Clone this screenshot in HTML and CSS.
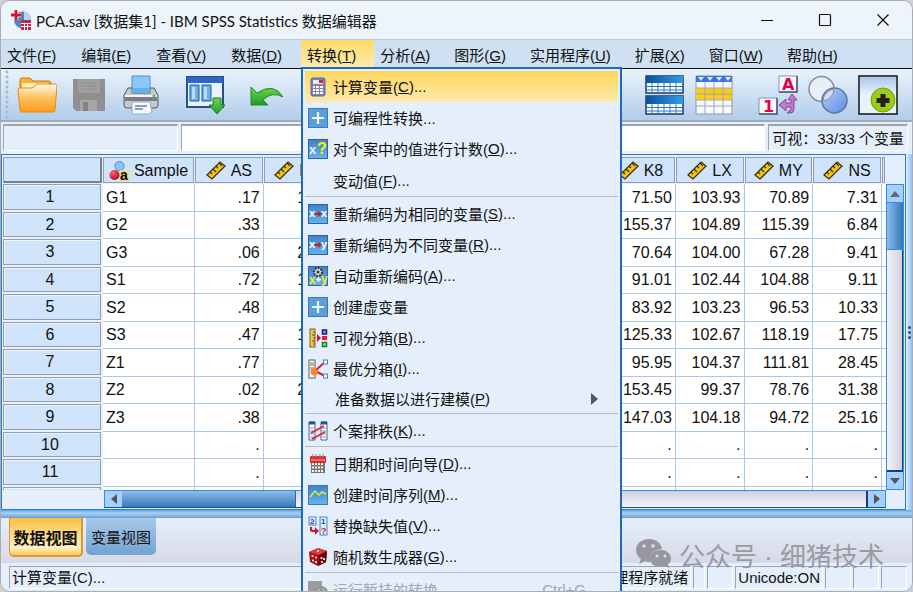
FILE: index.html
```html
<!DOCTYPE html>
<html lang="zh-CN">
<head>
  <meta charset="UTF-8" />
  <meta name="viewport" content="width=device-width, initial-scale=1" />
  <title>PCA.sav [数据集1] - IBM SPSS Statistics 数据编辑器</title>
  <link rel="stylesheet" href="styles.css">
</head>
<body>
  <!-- Shared icons -->
  <svg class="defs" aria-hidden="true">
    <defs>
      <linearGradient id="gBlue" x1="0" y1="0" x2="0" y2="1"><stop offset="0" stop-color="#3f83c8"/><stop offset="1" stop-color="#62b4e8"/></linearGradient>
      <linearGradient id="gFolder" x1="0" y1="0" x2="0" y2="1"><stop offset="0" stop-color="#fffbe8"/><stop offset=".5" stop-color="#ffc05a"/><stop offset="1" stop-color="#ff9a1f"/></linearGradient>
      <linearGradient id="gGreen" x1="0" y1="0" x2="0" y2="1"><stop offset="0" stop-color="#6fd84a"/><stop offset="1" stop-color="#1f9a28"/></linearGradient>
      <linearGradient id="gHead" x1="0" y1="0" x2="1" y2="0"><stop offset="0" stop-color="#0b4f96"/><stop offset="1" stop-color="#2f9bf0"/></linearGradient>
      <linearGradient id="gSky" x1="0" y1="0" x2="0" y2="1"><stop offset="0" stop-color="#a9c8ea"/><stop offset="1" stop-color="#edf5fd"/></linearGradient>
      <linearGradient id="gCircle" x1="0" y1="0" x2="1" y2="1"><stop offset="0" stop-color="#b9cff5"/><stop offset="1" stop-color="#5c8be6"/></linearGradient>
      <radialGradient id="gRed" cx=".35" cy=".3" r=".8"><stop offset="0" stop-color="#ff6a6a"/><stop offset="1" stop-color="#b00018"/></radialGradient>
    </defs>
    <symbol id="ruler" viewBox="0 0 20 20">
      <path d="M1 14 14 1l5 4L6 18z" fill="#f2c21c" stroke="#3a3110" stroke-width="1.3"/>
      <path d="m4 11 2 2M7 8l3 3M10 5l2 2M13 2l3 3" stroke="#3a3110" stroke-width="1.2"/>
    </symbol>
    <symbol id="nominal" viewBox="0 0 20 20">
      <circle cx="10.500" cy="5" r="4.600" fill="#8fc3f5" stroke="#4b8fd6"/>
      <circle cx="5.500" cy="14" r="5" fill="url(#gRed)"/>
      <rect x="11" y="9" width="9" height="11" fill="#f5d77e"/>
      <text x="11" y="18.500" font-size="14" font-weight="bold" font-family="Liberation Sans, sans-serif">a</text>
    </symbol>
    <symbol id="plus" viewBox="0 0 20 20">
      <rect x=".5" y=".5" width="19" height="19" fill="#5c9fd8" stroke="#3c78c0"/>
      <path d="M10 4v12M4 10h12" stroke="#e9f5ff" stroke-width="2.200"/>
    </symbol>
  </svg>

  <div class="window">
    <header class="titlebar">
      <svg class="app-icon" viewBox="0 0 20 20">
        <circle cx="11.500" cy="10" r="8.500" fill="#4e86bb"/>
        <path d="M13 1.500a8.500 8.500 0 0 1 7 8.500h-7z" fill="#b9d4ea"/>
        <path d="M5 0v10M0 5h10" stroke="#fff" stroke-width="4.500"/>
        <path d="M5 0v10M0 5h10" stroke="#d3132f" stroke-width="2.800"/>
        <rect x="10" y="10" width="10" height="10" fill="#c92349"/>
        <path d="M10 13.500h10M10 16.500h10M13.500 13v7M16.500 13v7" stroke="#fff"/>
      </svg>
      <h1>PCA.sav [数据集1] - IBM SPSS Statistics 数据编辑器</h1>
      <div class="win-buttons">
        <button aria-label="最小化"><svg viewBox="0 0 14 14"><path d="M1 7.500h12" /></svg></button>
        <button aria-label="最大化"><svg viewBox="0 0 14 14"><rect x="1.500" y="1.500" width="11" height="11" rx="1"/></svg></button>
        <button aria-label="关闭"><svg viewBox="0 0 14 14"><path d="m1.500 1.500 11 11M12.500 1.500l-11 11"/></svg></button>
      </div>
    </header>

    <nav class="menubar">
      <div class="menu"><button>文件(<u>F</u>)</button></div>
      <div class="menu"><button>编辑(<u>E</u>)</button></div>
      <div class="menu"><button>查看(<u>V</u>)</button></div>
      <div class="menu"><button>数据(<u>D</u>)</button></div>
      <div class="menu open">
        <button>转换(<u>T</u>)</button>
        <ul class="dropdown">
          <li><button class="selected">
            <svg viewBox="0 0 20 20"><rect x="3" y="1" width="14" height="18" rx="2" fill="#8181b5" stroke="#62629a"/><rect x="5" y="3" width="10" height="4" fill="#e9e9f8"/><rect x="11" y="3" width="4" height="3" fill="#c62b3c"/><path d="M5 10h2m1 0h3m1 0h3M5 13h2m1 0h3m1 0h3M5 16h2m1 0h3m1 0h3" stroke="#fff" stroke-width="2"/></svg>
            计算变量(<u>C</u>)...</button></li>
          <li><button><svg><use href="#plus"/></svg>可编程性转换...</button></li>
          <li><button>
            <svg viewBox="0 0 20 20"><rect x=".5" y=".5" width="19" height="19" fill="url(#gBlue)" stroke="#2f5fb0"/><text x="1" y="15" font-size="13" font-weight="bold" fill="#e6f2ff">x</text><text x="9" y="15" font-size="16" font-weight="bold" fill="#fff200">?</text></svg>
            对个案中的值进行计数(<u>O</u>)...</button></li>
          <li><button class="plain">变动值(<u>F</u>)...</button></li>
          <li class="sep"></li>
          <li><button>
            <svg viewBox="0 0 20 20"><rect x=".5" y=".5" width="19" height="19" fill="url(#gBlue)" stroke="#2f5fb0"/><text x="1" y="13" font-size="11" font-weight="bold" fill="#fff">x</text><text x="13" y="13" font-size="11" font-weight="bold" fill="#fff">x</text><path d="M7 9h3V7l4 3-4 3v-2H7z" fill="#d2142c"/></svg>
            重新编码为相同的变量(<u>S</u>)...</button></li>
          <li><button>
            <svg viewBox="0 0 20 20"><rect x=".5" y=".5" width="19" height="19" fill="url(#gBlue)" stroke="#2f5fb0"/><text x="1" y="13" font-size="11" font-weight="bold" fill="#fff">x</text><text x="13" y="13" font-size="11" font-weight="bold" fill="#fff">y</text><path d="M7 9h3V7l4 3-4 3v-2H7z" fill="#d2142c"/></svg>
            重新编码为不同变量(<u>R</u>)...</button></li>
          <li><button>
            <svg viewBox="0 0 20 20"><rect x=".5" y=".5" width="19" height="19" fill="url(#gBlue)" stroke="#2f5fb0"/><circle cx="10" cy="6" r="4" fill="#ddd" stroke="#333" stroke-width="2" stroke-dasharray="2 1"/><circle cx="10" cy="6" r="1.500" fill="#333"/><text x="1" y="18" font-size="12" font-weight="bold" fill="#f6ec2a">x</text><text x="13" y="17" font-size="12" font-weight="bold" fill="#f6ec2a">y</text><path d="M8 13.500h5M10.500 11v5" stroke="#fff" stroke-width="1.500"/></svg>
            自动重新编码(<u>A</u>)...</button></li>
          <li><button><svg><use href="#plus"/></svg>创建虚变量</button></li>
          <li><button>
            <svg viewBox="0 0 20 20"><rect x="2" y="1" width="5" height="18" fill="#f3c94a" stroke="#7b6420"/><path d="M5 4h2M4 7h3M5 10h2M4 13h3M5 16h2" stroke="#5c4a12"/><path d="m9 6 4 4-4 4z" fill="#d2142c"/><rect x="14.500" y="2" width="4" height="4" fill="#8fa4e0" stroke="#101a90" stroke-width="1.500"/><rect x="14" y="8" width="5" height="4" fill="#e02030"/><rect x="14.500" y="14.500" width="4" height="4" fill="#9bdc9b" stroke="#118022" stroke-width="1.500"/></svg>
            可视分箱(<u>B</u>)...</button></li>
          <li><button>
            <svg viewBox="0 0 20 20"><rect x="1" y="1" width="6" height="18" fill="#fff" stroke="#3a6190"/><rect x="2" y="3" width="4" height="4" fill="#e8b53a"/><rect x="2" y="8" width="4" height="3" fill="#a5b9cf"/><path d="M17 3 7 12l10 5" fill="none" stroke="#d8183c" stroke-width="2"/><circle cx="6" cy="13" r="3.500" fill="#ff8a12"/><rect x="15.500" y="1" width="4" height="4" fill="#fff" stroke="#4a83b5"/><rect x="15.500" y="15" width="4" height="4" fill="#fff" stroke="#4a83b5"/></svg>
            最优分箱(<u>I</u>)...</button></li>
          <li><button class="submenu">准备数据以进行建模(<u>P</u>)<span class="arrow"></span></button></li>
          <li class="sep"></li>
          <li><button>
            <svg viewBox="0 0 20 20"><path d="M1 1h6v18H1zM13 1h6v18h-6z" fill="#fff" stroke="#456091"/><path d="M1 2h6M13 2h6" stroke="#2d4f96" stroke-width="3"/><path d="M2 7h4M2 10h4M2 13h4M2 16h4M14 7h4M14 10h4M14 13h4M14 16h4" stroke="#8292ac"/><path d="M3 12 16 5M4 18l13-7" stroke="#d92836" stroke-width="1.800"/></svg>
            个案排秩(<u>K</u>)...</button></li>
          <li class="sep"></li>
          <li><button>
            <svg viewBox="0 0 20 20"><rect x="3" y="8" width="14" height="11" fill="#777"/><path d="M4 10h12M4 13.500h12M4 17h12" stroke="#eee" stroke-width="2" stroke-dasharray="2 1"/><rect x="2" y="2" width="16" height="7" rx="1" fill="#dd2c2c"/><path d="M3 6h14" stroke="#ffb0b0"/><path d="M5 0v4M8 0v4M12 0v4M15 0v4" stroke="#888"/></svg>
            日期和时间向导(<u>D</u>)...</button></li>
          <li><button>
            <svg viewBox="0 0 20 20"><rect x=".5" y=".5" width="19" height="19" fill="url(#gBlue)" stroke="#3c78c0"/><path d="m2 12 5-6 4 4 3-3 4 2" fill="none" stroke="#e3e92f" stroke-width="1.500"/></svg>
            创建时间序列(<u>M</u>)...</button></li>
          <li><button>
            <svg viewBox="0 0 20 20"><rect x="1" y="1" width="7" height="8" fill="#d9ebff" stroke="#4d88c8"/><rect x="12" y="1" width="7" height="18" fill="#d9ebff" stroke="#4d88c8"/><text x="2" y="8" font-size="8" font-weight="bold" fill="#24548f">2</text><text x="13" y="8" font-size="8" font-weight="bold" fill="#24548f">1</text><text x="13" y="18" font-size="9" font-weight="bold" fill="#e0202c">?</text><path d="M2 11h2v3h3v-3l4 4-4 4v-3H4q-2 0-2-2z" fill="#d2142c"/></svg>
            替换缺失值(<u>V</u>)...</button></li>
          <li><button>
            <svg viewBox="0 0 20 20"><path d="m1 5 9-4 9 3-1 11-8 4-8-4z" fill="#a80f16"/><path d="m1 5 9-4 9 3-8 4z" fill="#d84040"/><path d="m11 8 8-4-1 11-8 4z" fill="#6a070b"/><g fill="#fff"><circle cx="10" cy="4" r="1"/><circle cx="4.500" cy="9" r="1.100"/><circle cx="8" cy="15" r="1.100"/><circle cx="5" cy="13.500" r="1"/><circle cx="8" cy="10.500" r="1"/><circle cx="13.500" cy="11" r="1.100"/><circle cx="16" cy="12" r="1.100"/><circle cx="14" cy="15" r="1"/></g></svg>
            随机数生成器(<u>G</u>)...</button></li>
          <li class="sep"></li>
          <li><button disabled>
            <svg viewBox="0 0 20 20"><path d="M0 1h14v5a7 7 0 0 1 6 7v7H0z" fill="#9c9c9c"/><circle cx="13" cy="13" r="6" fill="#a9a9a9" stroke="#858585"/><path d="M13 9v4l3 2" fill="none" stroke="#777"/></svg>
            运行暂挂的转换<kbd>Ctrl+G</kbd></button></li>
        </ul>
      </div>
      <div class="menu"><button>分析(<u>A</u>)</button></div>
      <div class="menu"><button>图形(<u>G</u>)</button></div>
      <div class="menu"><button>实用程序(<u>U</u>)</button></div>
      <div class="menu"><button>扩展(<u>X</u>)</button></div>
      <div class="menu"><button>窗口(<u>W</u>)</button></div>
      <div class="menu"><button>帮助(<u>H</u>)</button></div>
    </nav>

    <div class="toolbar">
      <div class="tools">
        <button aria-label="打开"><svg viewBox="0 0 40 40"><path d="M3 5q0-2 2-2h8l3 3h15q3 0 3 2v10H3z" fill="#ffb02e" stroke="#c87a10"/><path d="M5 8h26v5H5z" fill="#fff1bd"/><path d="M1 15q0-2 2-2h12l5-4h18q2 0 2 2l-2 24q0 2-2 2H5q-2 0-2-2z" fill="url(#gFolder)" stroke="#e28a12"/></svg></button>
        <button aria-label="保存"><svg viewBox="0 0 40 40"><path d="M4 4h32v32H7l-3-3z" fill="#8f8f8f"/><path d="M9 4h22v14H9z" fill="#9f9f9f"/><path d="M12 8h16M12 11h16M12 14h16" stroke="#909090"/><path d="M11 25h17v11H11z" fill="#a6a6a6"/><path d="M14 27h5v9h-5z" fill="#838383"/></svg></button>
        <button aria-label="打印"><svg viewBox="0 0 40 40"><path d="M11 1h18v16H11z" fill="#8cc8f5" stroke="#4f94d0"/><path d="M7 13h4v5h18v-5h4l4 7v10q0 3-3 3H6q-3 0-3-3V20z" fill="#c9c9cd" stroke="#55565c"/><path d="M11 13h18v5H11z" fill="#62b0ef"/><path d="M4 21h32v5H4z" fill="#7c7d84"/><path d="M4 21h32" stroke="#f3f3f3" stroke-width="2"/><circle cx="33" cy="21" r="1.500" fill="#31c738"/><path d="M11 27h18l2 10-3 2H11z" fill="#f5fbff" stroke="#8eacca"/><path d="M14 31h12M14 34h8" stroke="#6a7fae" stroke-width="1.500"/></svg></button>
      </div>
      <div class="tools">
        <button aria-label="重新调用对话框"><svg viewBox="0 0 40 40"><path d="M2 2h36v30H2z" fill="#e9f3ff" stroke="#2c4f8a" stroke-width="2"/><path d="M2 2h36v6H2z" fill="#2d66c4"/><path d="M5 10h9v16H5zM17 10h9v16h-9z" fill="#67b2ee" stroke="#23588f"/><path d="M7 12h3v12H7zM19 12h3v12h-3z" fill="#b8deff"/><path d="M28 23h8v7h4l-8 9-8-9h4z" fill="url(#gGreen)" stroke="#178025"/></svg></button>
      </div>
      <div class="tools">
        <button aria-label="撤消"><svg viewBox="0 0 40 40"><path d="M2 12v18h17l-5-5q9-9 20-3Q25 7 8 18z" fill="url(#gGreen)" stroke="#23892c"/></svg></button>
        <button aria-label="重做"><svg viewBox="0 0 40 40"><path d="M34 12v18H17l5-5q-9-9-22-3Q11 7 28 18z" fill="url(#gGreen)" stroke="#23892c"/></svg></button>
      </div>
      <div class="tools right">
        <button aria-label="拆分文件"><svg viewBox="0 0 40 40"><path d="M2 1h37v17H2zM2 21h37v18H2z" fill="#fff" stroke="#173a6b" stroke-width="1.500"/><path d="M2 1h37v7H2zM2 21h37v8H2z" fill="url(#gHead)"/><path d="M2 11.500h37M2 15h37M2 32.500h37M2 36h37M8 8v10M14 8v10M20 8v10M26 8v10M32 8v10M8 29v10M14 29v10M20 29v10M26 29v10M32 29v10" stroke="#2876c8"/></svg></button>
        <button aria-label="选择个案"><svg viewBox="0 0 40 40"><path d="M2 1h36v38H2z" fill="#f7f9fd" stroke="#8d96aa"/><path d="M2 1h36v6H2z" fill="#3f71db"/><path d="m4 2 3 4 3-4zM13 2l3 4 3-4zM22 2l3 4 3-4zM31 2l3 4 3-4z" fill="#dce9ff"/><path d="M2 13h36v12H2z" fill="#f9cc1c"/><path d="M2 13h36M2 19h36M2 25h36M2 31h36M11 7v32M20 7v32M29 7v32" stroke="#a4a7b0"/></svg></button>
      </div>
      <div class="tools">
        <button aria-label="值标签"><svg viewBox="0 0 40 40"><path d="M21 1h18v16H21zM1 23h18v16H1z" fill="#f7f9ff" stroke="#8793ac"/><path d="M21 17h18V1M1 39h18V23" fill="none" stroke="#47546e" stroke-width="1.500"/><text x="24" y="15" font-size="16" font-weight="bold" fill="#e5004c">A</text><text x="5" y="37" font-size="16" font-weight="bold" fill="#e5004c">1</text><path d="m34 19 5 6h-3v9q0 4-4 4h-3l4-4v-2h-5v4l-7-6 7-6v4h5v-3h-3z" fill="#bd7bc9" stroke="#874897"/></svg></button>
        <button aria-label="使用变量集"><svg viewBox="0 0 40 40"><circle cx="13.500" cy="14" r="12.500" fill="#e8eff9" stroke="#858d9b" stroke-width="1.500"/><circle cx="26.500" cy="25.500" r="12.500" fill="url(#gCircle)" stroke="#64759a" stroke-width="1.500"/><path d="M15 26a12.500 12.500 0 0 0 11-12 12.500 12.500 0 0 0-11 12z" fill="#d0dff3" stroke="#858d9b"/></svg></button>
        <button aria-label="定制工具栏"><svg viewBox="0 0 40 40"><rect x="1" y="1" width="38" height="38" fill="#e8f2fc" stroke="#111" stroke-width="1.500"/><path d="M2 2h36v14L2 21z" fill="url(#gSky)"/><circle cx="25" cy="25" r="12" fill="#9ccd13" stroke="#769f0c"/><path d="M25 19v13M18.500 25.500h13" stroke="#222" stroke-width="5"/></svg></button>
      </div>
    </div>

    <div class="infobar">
      <output class="cell-name"></output>
      <input type="text" class="cell-value" aria-label="单元格值">
      <span class="visible-count">可视：33/33 个变量</span>
    </div>

    <main class="editor">
      <div class="sheet">
        <div class="table-wrap">
          <table>
            <colgroup>
              <col class="col-num"><col class="col-name">
              <col><col><col><col><col><col><col><col><col><col>
              <col class="col-more">
            </colgroup>
            <thead>
              <tr id="head"></tr>
            </thead>
            <tbody id="rows"></tbody>
          </table>
        </div>
        <div class="vbar"><button class="up" aria-label="向上"></button><div class="thumb"></div><div class="track"></div><button class="down" aria-label="向下"></button></div>
        <div class="hbar"><button class="prev" aria-label="向左"></button><div class="thumb"></div><div class="track"></div><button class="next" aria-label="向右"></button></div>
      </div>
      <div class="side-split"><i></i><i></i><i></i></div>
    </main>
    <div class="splitter"></div>

    <div class="tabs">
      <button class="active">数据视图</button>
      <button>变量视图</button>
      <div class="watermark">
        <svg viewBox="0 0 36 30"><path d="M13 0C5 0 0 5 0 11c0 4 2 7 5 9l-2 5 6-3q2 1 5 1-1-12 12-13C25 4 20 0 13 0z" fill="#96979f"/><path d="M25 11c-7 0-11 4-11 9s5 8 11 8l4-1 4 2-1-4c2-1 3-3 3-5 0-5-4-9-10-9z" fill="#96979f"/><g fill="#dfe2ee"><circle cx="8" cy="7" r="1.700"/><circle cx="17" cy="7" r="1.700"/><circle cx="21" cy="17" r="1.500"/><circle cx="29" cy="17" r="1.500"/></g></svg>
        <span>公众号 · 细猪技术</span>
      </div>
    </div>

    <footer class="statusbar">
      <span class="message">计算变量(C)...</span>
      <span class="processor">IBM SPSS Statistics 处理程序就绪</span>
      <span class="tiny"></span>
      <span class="small"></span>
      <span class="unicode">Unicode:ON</span>
      <span class="small"></span>
      <span class="small"></span>
      <span class="small"></span>
    </footer>
  </div>

  <script>
    const columns = ['AS', 'BS', '', '', '', '', 'K8', 'LX', 'MY', 'NS'];
    const data = [
      ['G1', '.17', '1.21', '', '', '', '', '71.50', '103.93', '70.89', '7.31'],
      ['G2', '.33', '.64', '', '', '', '', '155.37', '104.89', '115.39', '6.84'],
      ['G3', '.06', '2.35', '', '', '', '', '70.64', '104.00', '67.28', '9.41'],
      ['S1', '.72', '1.48', '', '', '', '', '91.01', '102.44', '104.88', '9.11'],
      ['S2', '.48', '.92', '', '', '', '', '83.92', '103.23', '96.53', '10.33'],
      ['S3', '.47', '1.07', '', '', '', '', '125.33', '102.67', '118.19', '17.75'],
      ['Z1', '.77', '.85', '', '', '', '', '95.95', '104.37', '111.81', '28.45'],
      ['Z2', '.02', '2.16', '', '', '', '', '153.45', '99.37', '78.76', '31.38'],
      ['Z3', '.38', '.59', '', '', '', '', '147.03', '104.18', '94.72', '25.16'],
      ['', '.', '.', '.', '.', '.', '.', '.', '.', '.', '.'],
      ['', '.', '.', '.', '.', '.', '.', '.', '.', '.', '.']
    ];

    const icon = name => `<svg><use href="#${name}"/></svg>`;
    document.getElementById('head').innerHTML =
      '<th></th><th><div>' + icon('nominal') + 'Sample</div></th>' +
      columns.map(c => `<th><div>${icon('ruler')}<span>${c}</span></div></th>`).join('') + '<th></th>';

    document.getElementById('rows').innerHTML = data.map((row, i) =>
      `<tr><th scope="row">${i + 1}</th>` + row.map(v => `<td>${v}</td>`).join('') + '<td></td></tr>'
    ).join('') + '<tr><th></th>' + '<td></td>'.repeat(12) + '</tr>';
  </script>
</body>
</html>
```
FILE: styles.css
```css
* { box-sizing: border-box; }
body { margin: 0; height: 100vh; overflow: hidden; background: #d0d0d2; color: #111; font: 15px "Liberation Sans", "Noto Sans CJK SC", sans-serif; }
button { font: inherit; color: inherit; border: 0; padding: 0; background: none; cursor: pointer; }
.defs { position: absolute; width: 0; height: 0; }
.window { display: flex; flex-direction: column; height: 100vh; border: 1px solid #a9adb2; border-radius: 10px; background: #e4effb; overflow: hidden; }

/* title */
.titlebar { display: flex; align-items: center; flex: none; height: 39px; padding-left: 10px; background: #edf4fa; border-bottom: 1px solid #b4cbdc; }
.titlebar h1 { flex: 1; margin: 0 0 0 5px; font: 15px Lato, "Noto Sans CJK SC", sans-serif; white-space: nowrap; }
.app-icon { width: 20px; height: 20px; }
.win-buttons { display: flex; height: 100%; }
.win-buttons button { width: 58px; }
.win-buttons svg { display: block; width: 14px; height: 14px; margin: 0 auto; fill: none; stroke: #111; stroke-width: 1.2; }

/* menu bar */
.menubar { display: flex; flex: none; height: 29px; background: #cee0f2; border-bottom: 1px solid #111; }
.menu { position: relative; }
.menu > button { height: 28px; padding: 0 18px 0 6px; white-space: nowrap; }
.menu:nth-child(-n+4) > button { padding-right: 19px; }
.menu.open > button { background: linear-gradient(#ffd968, #fdeab0); }

.dropdown { position: absolute; z-index: 10; top: 27px; left: 0; width: 321px; margin: 0; padding: 2px; list-style: none; background: #e4effb; border: 2px solid #2068b8; }
.dropdown button { display: flex; align-items: center; width: 100%; height: 31px; padding-left: 3px; text-align: left; white-space: nowrap; }
.dropdown svg { flex: none; width: 20px; height: 20px; margin-right: 5px; font-family: "Liberation Sans", sans-serif; }
.dropdown .selected { background: linear-gradient(#ffd75c, #fde9ae); }
.dropdown .plain { height: 32px; padding-left: 28px; }
.dropdown .submenu { height: 29px; padding-left: 30px; }
.dropdown .sep { height: 2px; border-top: 1px solid #b9bdc1; }
.dropdown :disabled { color: #a2a6ab; }
.dropdown kbd { margin: 0 32px 0 auto; font: inherit; }
.arrow { margin: 0 20px 0 auto; border: 6px solid transparent; border-left: 7px solid #555; border-right: 0; }

/* tool bar */
.toolbar { display: flex; align-items: center; flex: none; gap: 24px; height: 53px; padding: 0 14px 0 16px; background: radial-gradient(circle at 6px 3px, #aab8c8 1px, transparent 2px) 0 0 / 12px 5px repeat-y, linear-gradient(#eaf3fc, #b1cdea); border-bottom: 2px solid #a4aab1; }
.tools { display: flex; gap: 12px; }
.tools button { width: 40px; height: 40px; }
.tools svg { display: block; width: 40px; height: 40px; font-family: "DejaVu Sans", sans-serif; }
.tools.right { margin-left: auto; }
.tools.right, .tools.right ~ .tools { gap: 10px; }

.infobar { display: flex; flex: none; gap: 3px; height: 32px; padding: 2px 4px 3px 2px; }
.infobar > * { border: 1px solid #fff; border-top: 2px solid #9ea5ad; border-left: 1px solid #9ea5ad; border-radius: 0; }
.cell-name { width: 175px; }
.cell-value { flex: 1; min-width: 0; background: #fff; font: inherit; }
.visible-count { padding: 0 3px; line-height: 26px; white-space: nowrap; }

/* data sheet */
.editor { display: flex; flex: 1; min-height: 0; }
.sheet { flex: 1; min-width: 0; display: grid; grid-template: minmax(0, 1fr) 18px / minmax(0, 1fr) 18px; padding: 2px 1px 1px; border: 1px solid #2c7ac8; }
.table-wrap { overflow: hidden; background: #fff; }
table { width: 100%; table-layout: fixed; border-collapse: separate; border-spacing: 0; font-size: 16px; }
.col-num { width: 100px; }
.col-name { width: 92px; }
.col-more { width: 4px; }
th, td { padding: 0; height: inherit; overflow: hidden; white-space: nowrap; }
thead tr { height: 27px; }
tbody tr { height: 27px; }
tbody tr:nth-child(odd) { height: 28px; }
th { font-weight: normal; background: #cfe3fb; border: solid #e9f2fc; border-width: 0 1px 1px 0; box-shadow: inset 0 0 0 1px #929eb0, inset 2px 2px #ecf5ff; }
thead th { box-shadow: inset 0 0 0 1px #929eb0; }
thead th:first-child { box-shadow: inset 1px 1px #929eb0, inset -2px -2px #76818f; }
thead div { display: flex; align-items: center; justify-content: center; gap: 5px; height: 26px; padding-top: 2px; }
thead svg { flex: none; width: 20px; height: 20px; }
tbody th { padding-right: 4px; border-width: 0 2px 2px 0; }
td { padding-right: 3px; text-align: right; border-right: 1px solid #a9c9e8; border-bottom: 1px solid #a9c9e8; }
tbody th + td { padding-left: 3px; text-align: left; }
td:last-child { border-right: 0; }

.vbar { display: flex; flex-direction: column; margin-top: 27px; border: 1px solid #2f8fe8; }
.vbar button, .hbar button { display: grid; place-items: center; flex: none; background: #a5cfff; }
.vbar button { height: 17px; }
.vbar button::before, .hbar button::before { content: ""; border: 5px solid transparent; }
.vbar .up::before { border-bottom: 6px solid #666; border-top: 0; }
.vbar .down::before { border-top: 6px solid #555; border-bottom: 0; }
.vbar .thumb { height: 48px; border: solid #2f8fe8; border-width: 1px 0; background: linear-gradient(90deg, #8dbbe8, #3377b8); }
.vbar .track { flex: 1; background: linear-gradient(90deg, #f3f3f9, #d3cfdc); border-bottom: 2px solid #1d3c70; border-right: 1px solid #1d3c70; }
.hbar { display: flex; border: 1px solid #2f8fe8; border-bottom-color: #174f8c; margin-left: 101px; }
.hbar button { width: 17px; }
.hbar .prev::before { border-right: 6px solid #555; border-left: 0; }
.hbar .next::before { border-left: 6px solid #555; border-right: 0; }
.hbar .thumb { width: 174px; background: linear-gradient(#8fbde9, #3679ba); border-right: 1px solid #2068b8; }
.hbar .track { flex: 1; background: linear-gradient(#d3cfdc, #f3f3f9); border-right: 2px solid #1d3c70; }

.side-split { display: flex; flex-direction: column; align-items: center; justify-content: center; flex: none; gap: 2px; width: 6px; background: linear-gradient(90deg, #e4effb, #8fc2f3); }
.side-split i { width: 3px; height: 3px; border-radius: 50%; background: #294f94; }
.splitter { flex: none; height: 8px; background: linear-gradient(#5da6ea, #a9d1f8 40%, #6b9dcc); }

/* view tabs */
.tabs { position: relative; display: flex; align-items: flex-start; flex: none; gap: 3px; height: 45px; padding-left: 8px; background: linear-gradient(#e4effb, #d8d8e6); }
.tabs button { width: 70px; height: 37px; border-radius: 0 0 5px 5px; background: linear-gradient(#a6c9ec, #73a3d3); white-space: nowrap; }
.tabs .active { width: 74px; height: 39px; font-size: 16px; font-weight: bold; background: linear-gradient(#fbbf45, #fff0bd 80%, #fbc95e); border: solid #d99a2c; border-width: 0 2px 2px 1px; }
.watermark { position: absolute; z-index: 2; top: 18px; right: 28px; display: flex; align-items: center; gap: 7px; height: 36px; color: #999ba4; font: 26px "Liberation Sans", "Noto Sans CJK SC", sans-serif; white-space: nowrap; }
.watermark svg { width: 36px; height: 30px; }

/* status bar */
.statusbar { display: flex; flex: none; gap: 2px; height: 28px; padding: 3px 5px 2px 8px; background: #e4effb; white-space: nowrap; line-height: 22px; }
.statusbar span { border: 1px solid #fff; border-top-color: #9ea5ad; border-left-color: #9ea5ad; }
.statusbar .message { flex: 1; padding-left: 2px; }
.processor { padding: 0 2px; }
.tiny { width: 12px; }
.small { width: 26px; }
.unicode { padding: 0 2px; }
```
